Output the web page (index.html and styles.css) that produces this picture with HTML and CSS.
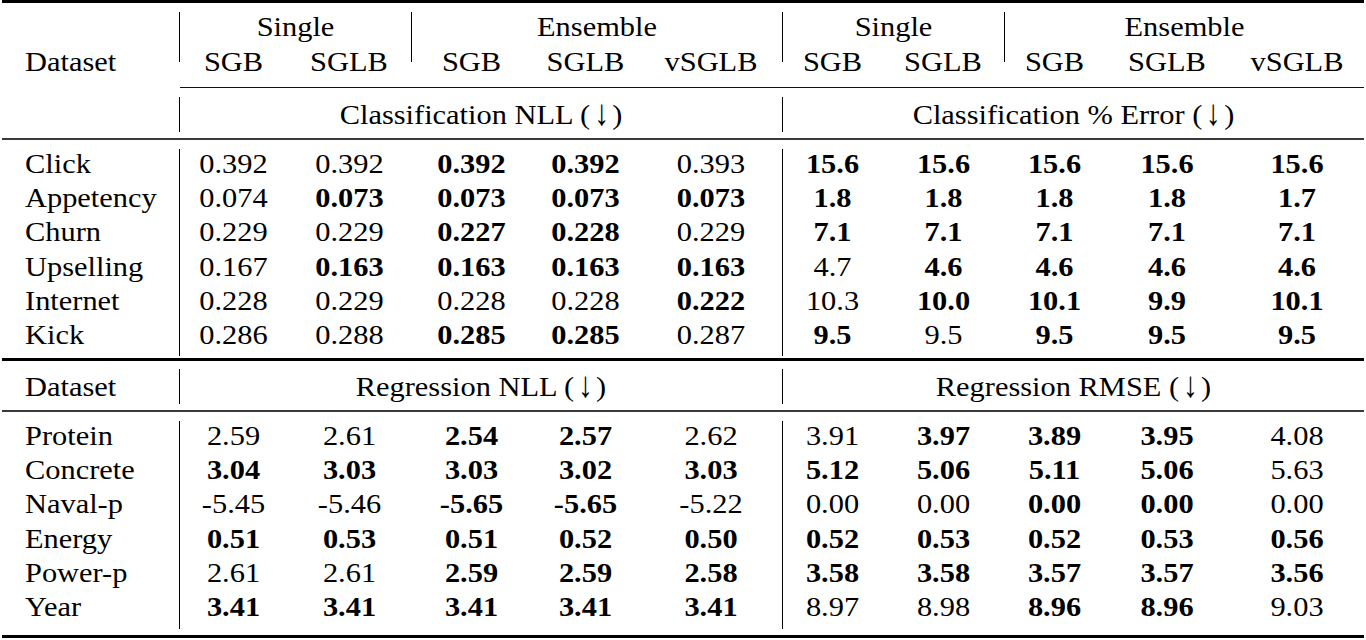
FILE: index.html
```html
<!DOCTYPE html>
<html lang="en">
<head>
<meta charset="utf-8">
<title>Results table</title>
<link rel="stylesheet" href="styles.css">
</head>
<body>
<div class="table">
  <div class="rule-thick"></div>

  <div class="band band-a">
    <div class="name">Dataset</div>
    <div class="sep"></div>
    <div class="hgroup g-single-l">
      <div class="ttl">Single</div>
      <div class="sub"><div>SGB</div><div>SGLB</div></div>
    </div>
    <div class="sep"></div>
    <div class="hgroup g-ens-l">
      <div class="ttl">Ensemble</div>
      <div class="sub"><div>SGB</div><div>SGLB</div><div>vSGLB</div></div>
    </div>
    <div class="sep"></div>
    <div class="hgroup g-single-r">
      <div class="ttl">Single</div>
      <div class="sub"><div>SGB</div><div>SGLB</div></div>
    </div>
    <div class="sep"></div>
    <div class="hgroup g-ens-r">
      <div class="ttl">Ensemble</div>
      <div class="sub"><div>SGB</div><div>SGLB</div><div>vSGLB</div></div>
    </div>
  </div>

  <div class="rule-cmid"></div>

  <div class="band band-b">
    <div class="name"></div>
    <div class="sep"></div>
    <div class="metric metric-l">Classification NLL (<span class="arrow">↓</span>)</div>
    <div class="sep"></div>
    <div class="metric metric-r">Classification % Error (<span class="arrow">↓</span>)</div>
  </div>

  <div class="rule-mid"></div>

  <div class="band band-c">
    <div class="name">
      <div>Click</div><div>Appetency</div><div>Churn</div><div>Upselling</div><div>Internet</div><div>Kick</div>
    </div>
    <div class="sep"></div>
    <div class="vals vals-l">
      <div>0.392</div><div>0.392</div><div class="b">0.392</div><div class="b">0.392</div><div>0.393</div>
      <div>0.074</div><div class="b">0.073</div><div class="b">0.073</div><div class="b">0.073</div><div class="b">0.073</div>
      <div>0.229</div><div>0.229</div><div class="b">0.227</div><div class="b">0.228</div><div>0.229</div>
      <div>0.167</div><div class="b">0.163</div><div class="b">0.163</div><div class="b">0.163</div><div class="b">0.163</div>
      <div>0.228</div><div>0.229</div><div>0.228</div><div>0.228</div><div class="b">0.222</div>
      <div>0.286</div><div>0.288</div><div class="b">0.285</div><div class="b">0.285</div><div>0.287</div>
    </div>
    <div class="sep"></div>
    <div class="vals vals-r">
      <div class="b">15.6</div><div class="b">15.6</div><div class="b">15.6</div><div class="b">15.6</div><div class="b">15.6</div>
      <div class="b">1.8</div><div class="b">1.8</div><div class="b">1.8</div><div class="b">1.8</div><div class="b">1.7</div>
      <div class="b">7.1</div><div class="b">7.1</div><div class="b">7.1</div><div class="b">7.1</div><div class="b">7.1</div>
      <div>4.7</div><div class="b">4.6</div><div class="b">4.6</div><div class="b">4.6</div><div class="b">4.6</div>
      <div>10.3</div><div class="b">10.0</div><div class="b">10.1</div><div class="b">9.9</div><div class="b">10.1</div>
      <div class="b">9.5</div><div>9.5</div><div class="b">9.5</div><div class="b">9.5</div><div class="b">9.5</div>
    </div>
  </div>

  <div class="rule-thick"></div>

  <div class="band band-d">
    <div class="name">Dataset</div>
    <div class="sep"></div>
    <div class="metric metric-l">Regression NLL (<span class="arrow">↓</span>)</div>
    <div class="sep"></div>
    <div class="metric metric-r">Regression RMSE (<span class="arrow">↓</span>)</div>
  </div>

  <div class="rule-mid"></div>

  <div class="band band-e">
    <div class="name">
      <div>Protein</div><div>Concrete</div><div>Naval-p</div><div>Energy</div><div>Power-p</div><div>Year</div>
    </div>
    <div class="sep"></div>
    <div class="vals vals-l">
      <div>2.59</div><div>2.61</div><div class="b">2.54</div><div class="b">2.57</div><div>2.62</div>
      <div class="b">3.04</div><div class="b">3.03</div><div class="b">3.03</div><div class="b">3.02</div><div class="b">3.03</div>
      <div>-5.45</div><div>-5.46</div><div class="b">-5.65</div><div class="b">-5.65</div><div>-5.22</div>
      <div class="b">0.51</div><div class="b">0.53</div><div class="b">0.51</div><div class="b">0.52</div><div class="b">0.50</div>
      <div>2.61</div><div>2.61</div><div class="b">2.59</div><div class="b">2.59</div><div class="b">2.58</div>
      <div class="b">3.41</div><div class="b">3.41</div><div class="b">3.41</div><div class="b">3.41</div><div class="b">3.41</div>
    </div>
    <div class="sep"></div>
    <div class="vals vals-r">
      <div>3.91</div><div class="b">3.97</div><div class="b">3.89</div><div class="b">3.95</div><div>4.08</div>
      <div class="b">5.12</div><div class="b">5.06</div><div class="b">5.11</div><div class="b">5.06</div><div>5.63</div>
      <div>0.00</div><div>0.00</div><div class="b">0.00</div><div class="b">0.00</div><div>0.00</div>
      <div class="b">0.52</div><div class="b">0.53</div><div class="b">0.52</div><div class="b">0.53</div><div class="b">0.56</div>
      <div class="b">3.58</div><div class="b">3.58</div><div class="b">3.57</div><div class="b">3.57</div><div class="b">3.56</div>
      <div>8.97</div><div>8.98</div><div class="b">8.96</div><div class="b">8.96</div><div>9.03</div>
    </div>
  </div>

  <div class="rule-thick"></div>
</div>
</body>
</html>
```

FILE: styles.css
```css
* {
  box-sizing: border-box;
  margin: 0;
  padding: 0;
}

html,
body {
  background: #fff;
}

body {
  margin: 0;
  font-family: "Liberation Serif", "Times New Roman", serif;
  font-size: 28px;
  color: #000;
}

.table {
  width: 1362px;
  margin-left: 2px;
}

.rule-thick {
  height: 3px;
  background: #000;
}

.rule-mid {
  height: 2px;
  background: #3a3a3a;
}

.rule-cmid {
  height: 1px;
  margin-left: 178px;
  background: #111;
}

.band {
  display: flex;
  align-items: flex-start;
}

.name {
  width: 177px;
  flex: none;
  padding-left: 23px;
  white-space: nowrap;
  transform: scaleX(1.086);
  transform-origin: 23px 50%;
}

.sep {
  width: 1px;
  flex: none;
  background: #000;
}

.b {
  font-weight: 700;
}

/* the typeset source is slightly wider than it is tall */
.ttl,
.sub > div,
.metric,
.vals > div {
  transform: scaleX(1.086);
}

.arrow {
  display: inline-block;
  font-size: 1.3em;
  line-height: 0;
  margin: 0 1px;
  transform: scaleX(0.75);
  vertical-align: -0.04em;
}

/* Header band */
.band-a {
  height: 84px;
}

.band-a .sep {
  margin-top: 9px;
  height: 50px;
}

.band-a .name {
  padding-top: 41px;
  line-height: 35px;
}

.hgroup {
  flex: none;
  padding-top: 6px;
  line-height: 35px;
  text-align: center;
  white-space: nowrap;
}

.sub {
  display: grid;
}

.g-single-l {
  width: 231px;
}

.g-single-l .sub {
  grid-template-columns: 107px 124px;
}

.g-ens-l {
  width: 370px;
}

.g-ens-l .sub {
  grid-template-columns: 119px 109px 142px;
}

.g-single-r {
  width: 221px;
}

.g-single-r .sub {
  grid-template-columns: 99px 122px;
}

.g-ens-r {
  width: 359px;
}

.g-ens-r .sub {
  grid-template-columns: 99px 126px 134px;
}

/* Metric title bands */
.metric {
  flex: none;
  line-height: 35px;
  text-align: center;
  white-space: nowrap;
}

.metric-l {
  width: 602px;
}

.metric-r {
  width: 581px;
}

.band-b {
  height: 50px;
}

.band-b .sep {
  margin-top: 9px;
  height: 35px;
}

.band-b .metric {
  padding-top: 8.5px;
}

.band-d {
  height: 49px;
}

.band-d .sep {
  margin-top: 8px;
  height: 35px;
}

.band-d .name,
.band-d .metric {
  padding-top: 7.5px;
  line-height: 35px;
}

/* Value bands */
.vals {
  display: grid;
  flex: none;
  text-align: center;
  white-space: nowrap;
}

.vals-l {
  width: 602px;
  grid-template-columns: 107px 125px 119px 109px 142px;
}

.vals-r {
  width: 581px;
  grid-template-columns: 99px 123px 99px 126px 134px;
}

.band-c {
  height: 218px;
}

.band-c .sep {
  margin-top: 9px;
  height: 207px;
}

.band-c .name,
.band-c .vals {
  padding-top: 6.7px;
  line-height: 34.28px;
}

.band-e {
  height: 223px;
}

.band-e .sep {
  margin-top: 9px;
  height: 208px;
}

.band-e .name,
.band-e .vals {
  padding-top: 6.7px;
  line-height: 34.28px;
}
```
